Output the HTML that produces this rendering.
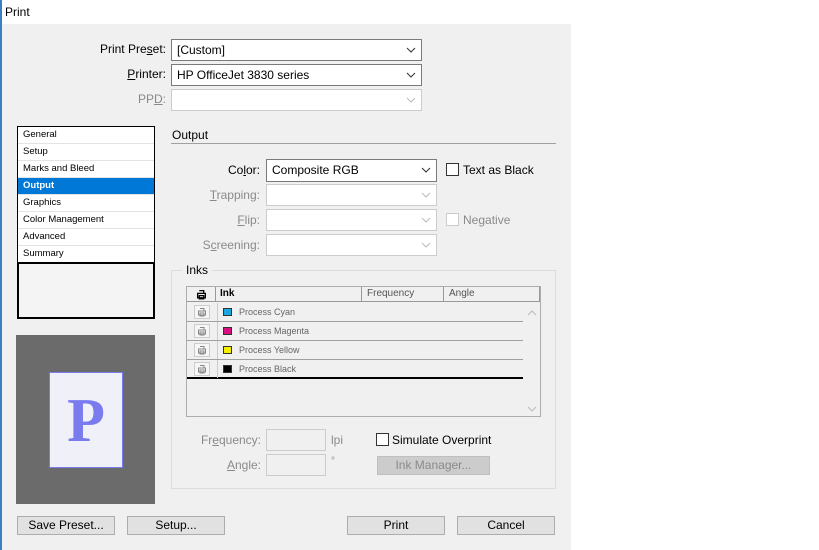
<!DOCTYPE html>
<html><head><style>
*{box-sizing:border-box;margin:0;padding:0}
body{width:819px;height:550px;background:#fff;position:relative;overflow:hidden;font-family:"Liberation Sans",sans-serif;font-size:12px;color:#000}
.a{position:absolute}
.dlg{left:0;top:24px;width:571px;height:526px;background:#f0f0f0}
.lbl{text-align:right;font-size:12px}
.sel{background:#fff;border:1px solid #7a7a7a;height:22px;padding:3px 5px;font-size:12px}
.dis{background:#fff;border:1px solid #ccc;height:22px}
.arr{position:absolute;right:5px;top:7px;width:10px;height:6px}
.g{color:#8a8a8a}
.list div{height:17px;padding-left:5px;font-size:9.5px;line-height:16px;border-bottom:1px solid #e3e3e3}
.btn{background:#e1e1e1;border:1px solid #adadad;height:19px;text-align:center;line-height:17px;font-size:12px}
.row{height:19px;border-bottom:1px solid #a0a0a0;font-size:9px;color:#666;line-height:18px;display:flex;align-items:center}
.sw{display:inline-block;width:9px;height:8px;border:1px solid #333;margin:0 7px 0 5px}
.pi{display:inline-flex;width:31px;justify-content:center;align-items:center;border-right:1px solid #ccc;height:18px}
.pi i{display:flex;width:16px;height:14px;border:1px solid #ccc;background:#f6f6f6;align-items:center;justify-content:center}
</style></head><body>
<svg width="0" height="0" style="position:absolute"><defs>
<symbol id="ch" viewBox="0 0 10 6"><path d="M1 1 L5 5 L9 1" fill="none" stroke="#333" stroke-width="1"/></symbol>
<symbol id="chg" viewBox="0 0 10 6"><path d="M1 1 L5 5 L9 1" fill="none" stroke="#bbb" stroke-width="1"/></symbol>
<symbol id="pr" viewBox="0 0 10 10"><path d="M3 1.5h4v2.5M1.5 4h7v4h-7zM3 6h4v3h-4z" fill="none" stroke="#888" stroke-width="1"/></symbol>
<symbol id="prb" viewBox="0 0 10 10"><path d="M3 1.5h4v2.5M1.5 4h7v4h-7zM3 6h4v3h-4z" fill="none" stroke="#000" stroke-width="1.2"/></symbol>
</defs></svg>
<div class="a" style="left:0;top:0;width:2px;height:550px;background:#3a7fc1"></div>
<div class="a" style="left:5px;top:5px;font-size:12px">Print</div>
<div class="a dlg"></div>
<div class="a" style="left:0;top:24px;width:2px;height:526px;background:#3a7fc1"></div>

<div class="a lbl" style="left:60px;top:42px;width:106px">Print Pre<u>s</u>et:</div>
<div class="a sel" style="left:171px;top:39px;width:251px">[Custom]<svg class="arr"><use href="#ch"/></svg></div>
<div class="a lbl" style="left:60px;top:67px;width:106px"><u>P</u>rinter:</div>
<div class="a sel" style="left:171px;top:64px;width:251px">HP OfficeJet 3830 series<svg class="arr"><use href="#ch"/></svg></div>
<div class="a lbl g" style="left:60px;top:92px;width:106px">PP<u>D</u>:</div>
<div class="a dis" style="left:171px;top:89px;width:251px"><svg class="arr"><use href="#chg"/></svg></div>

<div class="a list" style="left:17px;top:126px;width:138px;height:193px;border:1px solid #000;background:#fff">
<div>General</div><div>Setup</div><div>Marks and Bleed</div>
<div style="background:#0078d7;color:#fff;font-weight:bold">Output</div>
<div>Graphics</div><div>Color Management</div><div>Advanced</div><div style="border-bottom:1px solid #000">Summary</div>
</div>
<div class="a" style="left:17px;top:263px;width:138px;height:56px;border:2px solid #000;border-top:1px solid #000;background:#f4f4f4"></div>

<div class="a" style="left:16px;top:335px;width:139px;height:169px;background:#6b6b6b"></div>
<div class="a" style="left:49px;top:372px;width:74px;height:96px;background:#f0f0f8;border:1px solid #7a7aee"></div>
<div class="a" style="left:49px;top:386px;width:74px;text-align:center;font-family:'Liberation Serif',serif;font-weight:bold;font-size:62px;line-height:70px;color:#7b7bf0">P</div>

<div class="a" style="left:172px;top:128px;font-size:12px">Output</div>
<div class="a" style="left:171px;top:143px;width:385px;height:1px;background:#a0a0a0"></div>

<div class="a lbl" style="left:180px;top:163px;width:80px">Co<u>l</u>or:</div>
<div class="a sel" style="left:266px;top:159px;width:171px;height:23px">Composite RGB<svg class="arr"><use href="#ch"/></svg></div>
<div class="a" style="left:446px;top:163px;width:13px;height:13px;border:1px solid #333;background:#fff"></div>
<div class="a" style="left:463px;top:163px">Text as Black</div>
<div class="a lbl g" style="left:180px;top:188px;width:80px"><u>T</u>rapping:</div>
<div class="a dis" style="left:266px;top:184px;width:171px"><svg class="arr"><use href="#chg"/></svg></div>
<div class="a lbl g" style="left:180px;top:213px;width:80px"><u>F</u>lip:</div>
<div class="a dis" style="left:266px;top:209px;width:171px"><svg class="arr"><use href="#chg"/></svg></div>
<div class="a" style="left:446px;top:213px;width:13px;height:13px;border:1px solid #ccc;background:#fff"></div>
<div class="a g" style="left:463px;top:213px">Negative</div>
<div class="a lbl g" style="left:180px;top:238px;width:80px">S<u>c</u>reening:</div>
<div class="a dis" style="left:266px;top:234px;width:171px"><svg class="arr"><use href="#chg"/></svg></div>

<div class="a" style="left:171px;top:270px;width:385px;height:219px;border:1px solid #dcdcdc"></div>
<div class="a" style="left:182px;top:263px;background:#f0f0f0;padding:0 4px">Inks</div>

<div class="a" style="left:186px;top:286px;width:355px;height:131px;border:1px solid #adadad;background:#f0f0f0"></div>
<div class="a" style="left:187px;top:287px;width:353px;height:15px;background:#f0f0f0;border-bottom:1px solid #999;font-size:10px;line-height:14px">
<span class="a" style="left:0;width:29px;height:14px;border-right:1px solid #999;display:flex;justify-content:center;align-items:center"><svg width="11" height="11"><use href="#prb"/></svg></span>
<span class="a" style="left:33px;font-weight:bold">Ink</span>
<span class="a" style="left:174px;border-left:1px solid #999;padding-left:5px;color:#555;width:82px">Frequency</span>
<span class="a" style="left:256px;border-left:1px solid #999;padding-left:5px;color:#555;width:97px;border-right:1px solid #999">Angle</span>
</div>
<div class="a" style="left:187px;top:303px;width:336px">
<div class="row"><span class="pi"><i><svg width="10" height="10"><use href="#pr"/></svg></i></span><span class="sw" style="background:#1ba8e0"></span>Process Cyan</div>
<div class="row"><span class="pi"><i><svg width="10" height="10"><use href="#pr"/></svg></i></span><span class="sw" style="background:#d9107f"></span>Process Magenta</div>
<div class="row"><span class="pi"><i><svg width="10" height="10"><use href="#pr"/></svg></i></span><span class="sw" style="background:#f5f000"></span>Process Yellow</div>
<div class="row" style="border-bottom:2px solid #000"><span class="pi"><i><svg width="10" height="10"><use href="#pr"/></svg></i></span><span class="sw" style="background:#000"></span>Process Black</div>
</div>
<svg class="a" style="left:527px;top:310px" width="10" height="6"><path d="M1 5 L5 1 L9 5" fill="none" stroke="#bbb"/></svg>
<svg class="a" style="left:527px;top:406px" width="10" height="6"><use href="#chg"/></svg>

<div class="a lbl g" style="left:180px;top:433px;width:81px">Fr<u>e</u>quency:</div>
<div class="a" style="left:266px;top:429px;width:60px;height:22px;border:1px solid #ccc"></div>
<div class="a g" style="left:331px;top:433px">lpi</div>
<div class="a" style="left:376px;top:433px;width:13px;height:13px;border:1px solid #333;background:#fff"></div>
<div class="a" style="left:392px;top:433px">Simulate Overprint</div>
<div class="a lbl g" style="left:180px;top:458px;width:81px"><u>A</u>ngle:</div>
<div class="a" style="left:266px;top:454px;width:60px;height:22px;border:1px solid #ccc"></div>
<div class="a g" style="left:331px;top:456px;font-size:10px">&#176;</div>
<div class="a btn g" style="left:377px;top:456px;width:113px;background:#ccc;border-color:#bfbfbf">Ink Manager...</div>

<div class="a btn" style="left:17px;top:516px;width:98px">Save Preset...</div>
<div class="a btn" style="left:127px;top:516px;width:98px">Setup...</div>
<div class="a btn" style="left:347px;top:516px;width:98px">Print</div>
<div class="a btn" style="left:457px;top:516px;width:98px">Cancel</div>
</body></html>
